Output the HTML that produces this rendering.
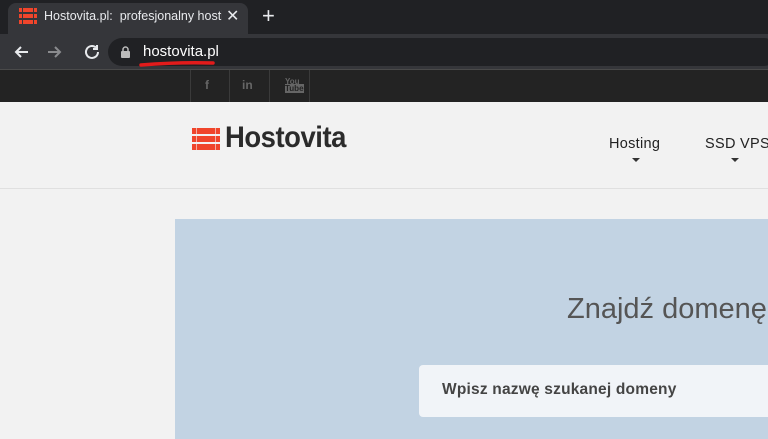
<!DOCTYPE html>
<html><head><meta charset="utf-8"><style>
*{margin:0;padding:0;box-sizing:border-box}
body{width:768px;height:435px;overflow:hidden;background:#f2f2f2;font-family:"Liberation Sans",sans-serif;position:relative}
.a{position:absolute}
</style></head><body>
<div class="a" style="left:0;top:0;width:768px;height:34px;background:#202124"></div>
<div class="a" style="left:8px;top:3px;width:240px;height:32px;background:#35363a;border-radius:8px 8px 0 0"></div>
<svg class="a" style="left:19px;top:8px" width="18" height="16"><g fill="#f0452b"><rect x="0" y="0" width="18" height="4"/><rect x="0" y="6" width="18" height="4"/><rect x="0" y="12" width="18" height="4"/></g><g fill="#35363a"><rect x="3" y="0" width="1" height="16"/><rect x="14" y="0" width="1" height="16"/></g></svg>
<div class="a" style="left:44px;top:9px;font-size:12.5px;color:#e8eaed;white-space:nowrap;width:178px;overflow:hidden">Hostovita.pl:&nbsp; profesjonalny hosting</div>
<div class="a" style="left:226px;top:6px;font-size:16px;color:#e8eaed">✕</div>
<div class="a" style="left:262px;top:3px;font-size:22px;color:#e8eaed">+</div>
<div class="a" style="left:0;top:34px;width:768px;height:35px;background:#35363a"></div>
<svg class="a" style="left:14px;top:44px" width="90" height="16" fill="none" stroke-width="2"><path d="M14 8H2M7 3L2 8l5 5" stroke="#e8eaed"/><path d="M34 8h12M41 3l5 5-5 5" stroke="#8a8b8e"/><path d="M84 8a6 6 0 1 1-2-4.5M83 1v4h-4" stroke="#e8eaed"/></svg>
<div class="a" style="left:108px;top:38px;width:670px;height:28px;background:#202124;border-radius:14px"></div>
<svg class="a" style="left:121px;top:46px" width="9" height="12"><rect x="0" y="5" width="9" height="7" rx="1" fill="#bbb"/><path d="M2 5V3.5a2.5 2.5 0 0 1 5 0V5" stroke="#bbb" stroke-width="1.5" fill="none"/></svg>
<div class="a" style="left:143px;top:43px;font-size:15px;color:#fff">hostovita.pl</div>
<svg class="a" style="left:138px;top:58px" width="80" height="10"><path d="M3 7Q40 4 75 5" stroke="#e21b1b" stroke-width="3.5" fill="none" stroke-linecap="round"/></svg>
<div class="a" style="left:0;top:69px;width:768px;height:1px;background:#4a4a4a"></div>
<div class="a" style="left:0;top:70px;width:768px;height:32px;background:#232323"></div>
<div class="a" style="left:190px;top:70px;width:120px;height:32px;border-left:1px solid #3a3a3a;border-right:1px solid #3a3a3a"></div>
<div class="a" style="left:229px;top:70px;width:41px;height:32px;border-left:1px solid #3a3a3a;border-right:1px solid #3a3a3a"></div>
<div class="a" style="left:205px;top:78px;font-size:12px;color:#666;font-weight:bold">f</div>
<div class="a" style="left:242px;top:78px;font-size:12px;color:#666;font-weight:bold">in</div>
<div class="a" style="left:285px;top:78px;font-size:8px;color:#666;font-weight:bold;line-height:7px">You<br><span style="background:#666;color:#232323">Tube</span></div>
<svg class="a" style="left:192px;top:128px" width="28" height="22"><g fill="#f0452b"><rect x="0" y="0" width="28" height="6"/><rect x="0" y="8" width="28" height="6"/><rect x="0" y="16" width="28" height="6"/></g><g fill="#f2f2f2" opacity=".6"><rect x="4" y="0" width="1" height="22"/><rect x="23" y="0" width="1" height="22"/></g></svg>
<div class="a" style="left:225px;top:121px;font-size:30px;font-weight:bold;color:#2b2b2b;letter-spacing:-0.5px;transform:scaleX(.915);transform-origin:0 0">Hostovita</div>
<div class="a" style="left:609px;top:136px;font-size:14.5px;color:#222;font-weight:500;letter-spacing:.3px">Hosting</div>
<div class="a" style="left:705px;top:136px;font-size:14.5px;color:#222;font-weight:500;letter-spacing:.3px;white-space:nowrap">SSD VPS</div>
<div class="a" style="left:632px;top:158px;border:4px solid transparent;border-top:4px solid #333;border-bottom:0"></div>
<div class="a" style="left:731px;top:158px;border:4px solid transparent;border-top:4px solid #333;border-bottom:0"></div>
<div class="a" style="left:0;top:188px;width:768px;height:1px;background:#e0e0e0"></div>
<div class="a" style="left:175px;top:219px;width:600px;height:220px;background:#c2d3e3"></div>
<div class="a" style="left:567px;top:293px;font-size:29px;color:#555;white-space:nowrap">Znajdź domenę T</div>
<div class="a" style="left:419px;top:365px;width:360px;height:52px;background:#f1f4f8;border-radius:4px"></div>
<div class="a" style="left:442px;top:381px;font-size:15.5px;color:#444;font-weight:bold;letter-spacing:.2px">Wpisz nazwę szukanej domeny</div>
</body></html>
